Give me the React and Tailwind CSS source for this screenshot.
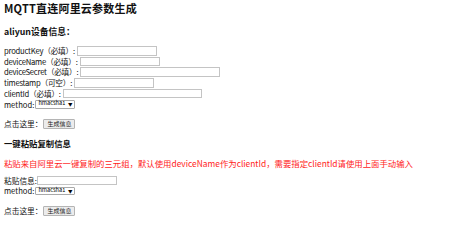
import React from 'react'

function Field({ label, width }) {
  return (
    <div className="flex items-center h-[10.7px]">
      <span className="tracking-[-0.25px]">{label}</span>
      <input
        type="text"
        className="ml-[2px] h-[9.5px] border border-[#c4c4c4] bg-white outline-none"
        style={{ width }}
      />
    </div>
  )
}

function MethodSelect() {
  return (
    <div className="flex items-center h-[10.7px]">
      <span>method:</span>
      <div className="ml-[1px] flex items-center justify-between w-[40px] h-[8.5px] border border-[#a9a9a9] rounded-[1px] bg-white pl-[2px] pr-[2px] text-[5.6px] leading-none text-black">
        <span>hmacsha1</span>
        <span className="text-[4.5px]">▼</span>
      </div>
    </div>
  )
}

function GenerateRow({ className }) {
  return (
    <div className={`flex items-center h-[11px] ${className}`}>
      <span>点击这里：</span>
      <button className="ml-[1px] w-[32px] h-[10px] border border-[#b4b4b4] bg-[#ececec] rounded-[1px] text-[6px] leading-none text-[#222]">
        生成信息
      </button>
    </div>
  )
}

export default function App() {
  return (
    <div
      className="w-[474px] h-[217px] overflow-hidden bg-white pl-[4px] text-[7.7px] text-[#111]"
      style={{ fontFamily: '"Noto Sans CJK SC", "Noto Sans", sans-serif' }}
    >
      {/* title */}
      <h2 className="text-[11px] font-bold leading-[16px] tracking-[0.2px]">MQTT直连阿里云参数生成</h2>

      {/* manual form */}
      <h4 className="mt-[10px] text-[8.8px] font-bold leading-[11px]">aliyun设备信息：</h4>
      <div className="mt-[8.5px]">
        <Field label="productKey（必填）:" width="80px" />
        <Field label="deviceName（必填）:" width="80px" />
        <Field label="deviceSecret（必填）:" width="140px" />
        <Field label="timestamp（可空）:" width="80px" />
        <Field label="clientId（必填）:" width="139px" />
        <MethodSelect />
      </div>
      <GenerateRow className="mt-[8.5px]" />

      {/* paste form */}
      <h4 className="mt-[8.6px] text-[8.4px] font-bold leading-[11px]">一键粘贴复制信息</h4>
      <p className="mt-[9px] text-[8.4px] leading-[11px] text-[#ff1a1a]">
        粘贴来自阿里云一键复制的三元组，默认使用deviceName作为clientId，需要指定clientId请使用上面手动输入
      </p>
      <div className="mt-[6.5px]">
        <div className="flex items-center h-[10.5px]">
          <span>粘贴信息:</span>
          <input
            type="text"
            className="h-[9.5px] w-[80px] border border-[#c4c4c4] bg-white outline-none"
          />
        </div>
        <MethodSelect />
      </div>
      <GenerateRow className="mt-[9px]" />
    </div>
  )
}
